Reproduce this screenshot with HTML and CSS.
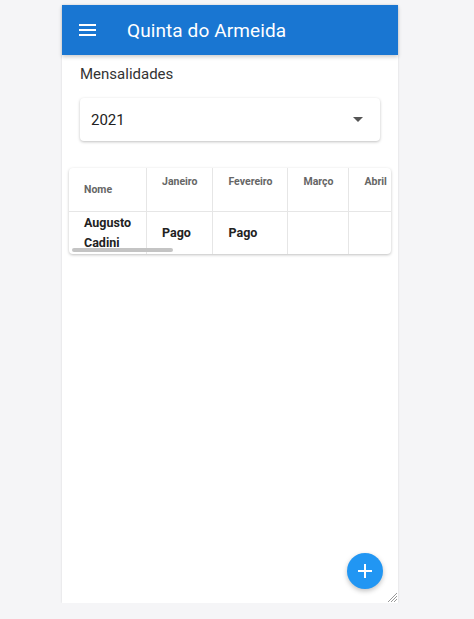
FILE: index.html
```html
<!DOCTYPE html>
<html lang="pt">
<head>
<meta charset="utf-8">
<title>Quinta do Armeida</title>
<link rel="stylesheet" href="styles.css">
</head>
<body>
<div class="frame">
  <header class="appbar">
    <svg class="menu" width="17" height="12" viewBox="0 0 17 12"><rect x="0" y="0" width="17" height="2" fill="#fff"/><rect x="0" y="5" width="17" height="2" fill="#fff"/><rect x="0" y="10" width="17" height="2" fill="#fff"/></svg>
    <span class="title">Quinta do Armeida</span>
  </header>
  <main class="content">
    <h2 class="section">Mensalidades</h2>
    <div class="select">
      <span>2021</span>
      <svg width="10" height="5" viewBox="0 0 10 5"><path d="M0 0h10L5 5z" fill="#555"/></svg>
    </div>
    <div class="tablecard">
      <table class="grid">
        <thead>
          <tr><th class="name">Nome</th><th>Janeiro</th><th>Fevereiro</th><th>Março</th><th>Abril</th></tr>
        </thead>
        <tbody>
          <tr><td class="person">Augusto<br>Cadini</td><td>Pago</td><td>Pago</td><td></td><td></td></tr>
        </tbody>
      </table>
      <div class="thumb"></div>
    </div>
  </main>
  <button class="fab" aria-label="Adicionar"><svg width="14" height="14" viewBox="0 0 14 14"><path d="M7 0v14M0 7h14" stroke="#fff" stroke-width="2"/></svg></button>
  <svg class="grip" width="10" height="10" viewBox="0 0 10 10"><path d="M10 1L1 10M10 4L4 10M10 7L7 10" stroke="#999" stroke-width="1"/></svg>
</div>
</body>
</html>
```
FILE: styles.css
```css
* { box-sizing: border-box; }
html, body { margin: 0; padding: 0; }
body {
  background: #f5f5f7;
  font-family: Roboto, "Liberation Sans", sans-serif;
  padding: 5px 0 0 62px;
}
.frame {
  position: relative;
  width: 336px;
  height: 598px;
  background: #fff;
  box-shadow: 0 0 2px rgba(0,0,0,0.12);
  display: flex;
  flex-direction: column;
}
.appbar {
  height: 50px;
  background: #1976d2;
  display: flex;
  align-items: center;
  padding-left: 17px;
  box-shadow: 0 2px 4px rgba(0,0,0,0.2);
  position: relative;
  z-index: 1;
}
.menu { display: block; }
.title {
  color: #fff;
  font-size: 19px;
  margin-left: 31px;
  letter-spacing: 0.1px;
}
.content {
  padding: 10px 7px 0 7px;
}
.section {
  margin: 0 0 0 11px;
  font-size: 15px;
  font-weight: 400;
  color: #333;
  line-height: 18px;
}
.select {
  margin: 15px 11px 0 11px;
  height: 43px;
  border-radius: 4px;
  box-shadow: 0 1px 3px rgba(0,0,0,0.25);
  display: flex;
  align-items: center;
  justify-content: space-between;
  padding: 0 17px 0 11px;
  font-size: 15px;
  color: #222;
}
.tablecard {
  position: relative;
  margin-top: 27px;
  width: 322px;
  border-radius: 4px;
  box-shadow: 0 1px 3px rgba(0,0,0,0.25);
  overflow: hidden;
}
.grid {
  border-collapse: collapse;
  white-space: nowrap;
}
.grid th {
  height: 43px;
  padding: 7px 15px 0 15px;
  vertical-align: top;
  text-align: left;
  font-size: 10.5px;
  font-weight: 700;
  color: #666;
  border-right: 1px solid #e6e6e6;
  border-bottom: 1px solid #e6e6e6;
}
.grid th:last-child { border-right: 0; padding-right: 7px; }
.grid th.name { padding-top: 15px; }
.grid td {
  height: 43px;
  padding: 0 15px;
  font-size: 12.5px;
  font-weight: 700;
  color: #222;
  border-right: 1px solid #e6e6e6;
  line-height: 20px;
}
.grid td:last-child { border-right: 0; }
.grid td.person { padding-top: 1px; }
.thumb {
  position: absolute;
  left: 3px;
  bottom: 2px;
  width: 101px;
  height: 4px;
  border-radius: 2px;
  background: #c4c4c4;
}
.fab {
  position: absolute;
  right: 15px;
  bottom: 14px;
  width: 36px;
  height: 36px;
  border-radius: 50%;
  border: 0;
  padding: 0;
  background: #2196f3;
  box-shadow: 0 2px 5px rgba(0,0,0,0.25);
  display: flex;
  align-items: center;
  justify-content: center;
}
.grip {
  position: absolute;
  right: 1px;
  bottom: 1px;
}
```
